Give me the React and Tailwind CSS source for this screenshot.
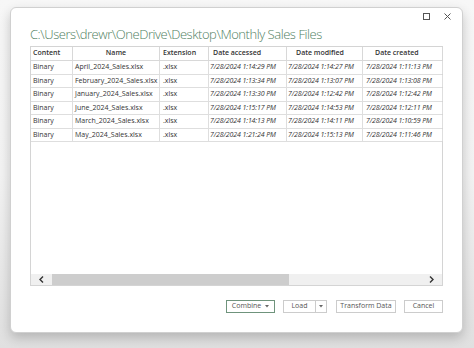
import React from 'react'

const columns = [
  { key: 'content', label: 'Content', w: 'w-[42px]', head: 'pl-[2px]', cell: 'pl-[2px]' },
  { key: 'name', label: 'Name', w: 'w-[87px]', head: 'justify-center', cell: 'pl-[2px]' },
  { key: 'ext', label: 'Extension', w: 'w-[49px]', head: 'pl-[3px]', cell: 'pl-[3px]' },
  { key: 'accessed', label: 'Date accessed', w: 'w-[78px]', head: 'pl-[4px]', cell: 'pl-[1px] italic tracking-[-0.12px]' },
  { key: 'modified', label: 'Date modified', w: 'w-[76px]', head: 'pl-[9px]', cell: 'pl-[1px] italic tracking-[-0.12px]' },
  { key: 'created', label: 'Date created', w: 'w-[80px]', head: 'pl-[12px]', cell: 'pl-[3px] italic tracking-[-0.12px]' },
]

const rows = [
  ['Binary', 'April_2024_Sales.xlsx', '.xlsx', '7/28/2024 1:14:29 PM', '7/28/2024 1:14:27 PM', '7/28/2024 1:11:13 PM'],
  ['Binary', 'February_2024_Sales.xlsx', '.xlsx', '7/28/2024 1:13:34 PM', '7/28/2024 1:13:07 PM', '7/28/2024 1:13:08 PM'],
  ['Binary', 'January_2024_Sales.xlsx', '.xlsx', '7/28/2024 1:13:30 PM', '7/28/2024 1:12:42 PM', '7/28/2024 1:12:42 PM'],
  ['Binary', 'June_2024_Sales.xlsx', '.xlsx', '7/28/2024 1:15:17 PM', '7/28/2024 1:14:53 PM', '7/28/2024 1:12:11 PM'],
  ['Binary', 'March_2024_Sales.xlsx', '.xlsx', '7/28/2024 1:14:13 PM', '7/28/2024 1:14:11 PM', '7/28/2024 1:10:59 PM'],
  ['Binary', 'May_2024_Sales.xlsx', '.xlsx', '7/28/2024 1:21:24 PM', '7/28/2024 1:15:13 PM', '7/28/2024 1:11:46 PM'],
]

const Caret = () => (
  <svg width="4" height="3" viewBox="0 0 4 3" className="fill-[#666]">
    <path d="M0 0h4L2 2.5z" />
  </svg>
)

export default function App() {
  return (
    <div
      className="w-[474px] h-[348px] bg-gradient-to-b from-[#f7f7f7] via-[#f3f3f3] to-[#e0e0e0] pt-[7px] pl-[10px] overflow-hidden"
      style={{ fontFamily: '"Open Sans", "Noto Sans", sans-serif' }}
    >
      <div className="w-[453px] h-[326px] bg-white border border-[#d0d0d0] rounded-[6px] shadow-[0_5px_12px_rgba(0,0,0,0.2)] flex flex-col px-[19px]">
        {/* window buttons */}
        <div className="flex justify-end items-center gap-[14px] h-[9px] mt-[4px] -mr-[8px]">
          <div className="w-[7px] h-[7px] border border-[#555]" />
          <svg width="7" height="7" viewBox="0 0 7 7" className="stroke-[#555]">
            <path d="M0.5 0.5l6 6M6.5 0.5l-6 6" strokeWidth="1" />
          </svg>
        </div>

        {/* title */}
        <div className="mt-[5px] mb-[4px] h-[16px] leading-[16px] text-[13px] font-light text-[#4f8061] tracking-[-0.45px] whitespace-nowrap">
          C:\Users\drewr\OneDrive\Desktop\Monthly Sales Files
        </div>

        {/* table */}
        <div className="h-[240px] border border-[#d4d4d4] flex flex-col text-[7px] text-[#333]">
          <div className="flex h-[14px] border-b border-[#d8d8d8] font-semibold">
            {columns.map((c) => (
              <div key={c.key} className={`${c.w} ${c.head} flex items-center border-r border-[#d8d8d8] shrink-0`}>
                {c.label}
              </div>
            ))}
          </div>
          {rows.map((r, i) => (
            <div key={i} className="flex h-[13.5px] border-b border-[#dedede]">
              {r.map((v, j) => (
                <div key={j} className={`${columns[j].w} ${columns[j].cell} flex items-center border-r border-[#dedede] shrink-0 whitespace-nowrap overflow-hidden`}>
                  {v}
                </div>
              ))}
            </div>
          ))}
          <div className="flex-1" />
          {/* horizontal scrollbar */}
          <div className="h-[11px] flex items-center bg-[#f0f0f0]">
            <div className="w-[21px] flex justify-center">
              <svg width="5" height="7" viewBox="0 0 5 7" className="stroke-[#333]">
                <path d="M4 0.5L1 3.5L4 6.5" strokeWidth="1.4" fill="none" />
              </svg>
            </div>
            <div className="w-[237px] h-[11px] bg-[#cdcdcd]" />
            <div className="flex-1" />
            <div className="w-[21px] flex justify-center">
              <svg width="5" height="7" viewBox="0 0 5 7" className="stroke-[#333]">
                <path d="M1 0.5L4 3.5L1 6.5" strokeWidth="1.4" fill="none" />
              </svg>
            </div>
          </div>
        </div>

        {/* buttons */}
        <div className="flex justify-end mt-[14px] text-[7px] text-[#555]">
          <button className="w-[49px] h-[13px] border border-[#6f937c] bg-white flex items-center justify-center gap-[4px]">
            Combine <Caret />
          </button>
          <div className="ml-[8px] flex h-[13px] border border-[#cccccc]">
            <button className="w-[32px] flex items-center justify-center border-r border-[#cccccc]">Load</button>
            <button className="w-[10px] flex items-center justify-center"><Caret /></button>
          </div>
          <button className="ml-[9px] w-[60px] h-[13px] border border-[#cccccc] flex items-center justify-center">
            Transform Data
          </button>
          <button className="ml-[8px] w-[39px] h-[13px] border border-[#cccccc] flex items-center justify-center">
            Cancel
          </button>
        </div>
      </div>
    </div>
  )
}
